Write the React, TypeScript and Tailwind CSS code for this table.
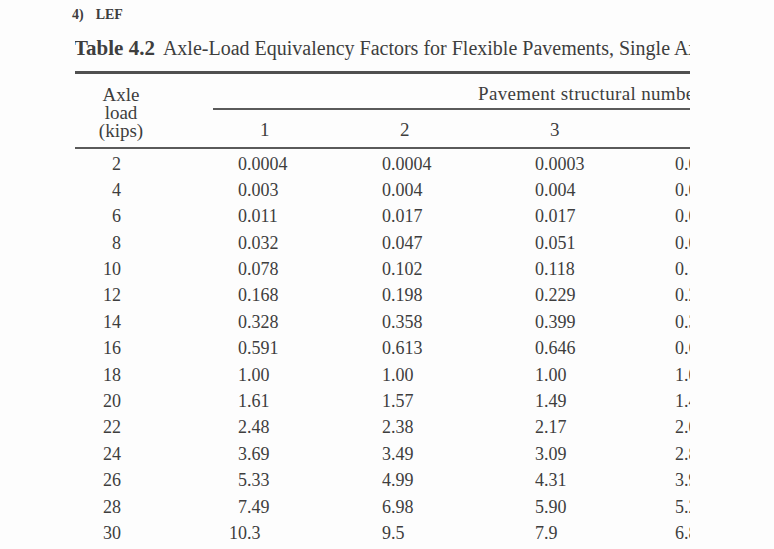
import React from "react";

const rows: [string, string, string, string, string][] = [
  ["2", "0.0004", "0.0004", "0.0003", "0.0002"],
  ["4", "0.003", "0.004", "0.004", "0.003"],
  ["6", "0.011", "0.017", "0.017", "0.013"],
  ["8", "0.032", "0.047", "0.051", "0.041"],
  ["10", "0.078", "0.102", "0.118", "0.102"],
  ["12", "0.168", "0.198", "0.229", "0.213"],
  ["14", "0.328", "0.358", "0.399", "0.388"],
  ["16", "0.591", "0.613", "0.646", "0.645"],
  ["18", "1.00", "1.00", "1.00", "1.00"],
  ["20", "1.61", "1.57", "1.49", "1.47"],
  ["22", "2.48", "2.38", "2.17", "2.09"],
  ["24", "3.69", "3.49", "3.09", "2.89"],
  ["26", "5.33", "4.99", "4.31", "3.91"],
  ["28", "7.49", "6.98", "5.90", "5.21"],
  ["30", "10.3", "9.5", "7.9", "6.83"],
];

// decimal-aligned value: integer part right-aligned in a fixed box
function Value({ v, pad }: { v: string; pad: string }) {
  const [int, frac] = v.split(".");
  return (
    <div className={`w-[150px] shrink-0 ${pad}`}>
      <span className="inline-block w-[18px] text-right">{int}</span>.{frac}
    </div>
  );
}

export default function App() {
  return (
    <div
      className="w-[774px] h-[549px] overflow-hidden bg-[#fdfdfd] text-[#3e3e3e]"
      style={{ fontFamily: '"Liberation Serif", "Times New Roman", serif' }}
    >
      <div className="pl-[72px] pt-[8px] text-[14px] leading-[14px] font-bold">
        4)<span className="ml-[12px]">LEF</span>
      </div>

      <div className="ml-[75px] w-[615px] overflow-hidden">
        <div className="mt-[16px] -ml-[1px] text-[20px] leading-[21px] whitespace-nowrap">
          <span className="font-bold text-[21px]">Table 4.2</span>
          <span className="ml-[8px]">
            Axle-Load Equivalency Factors for Flexible Pavements, Single Axles
          </span>
        </div>

        <div className="mt-[12px] h-[3px] bg-[#505050]" />

        {/* header */}
        <div className="flex text-[19px] leading-[18px]">
          <div className="w-[138px] shrink-0 pt-[12px] pr-[46px] text-center">
            <div>Axle</div>
            <div>load</div>
            <div>(kips)</div>
          </div>
          <div className="flex-1 flex flex-col whitespace-nowrap">
            <div className="pt-[11px] pl-[265px] tracking-[0.35px]">
              Pavement structural number (SN)
            </div>
            <div className="mt-[5px] h-[1.5px] w-[900px] bg-[#5a5a5a]" />
            <div className="flex mt-[11px]">
              <div className="w-[150px] shrink-0 pl-[47px]">1</div>
              <div className="w-[150px] shrink-0 pl-[37px]">2</div>
              <div className="w-[150px] shrink-0 pl-[37px]">3</div>
              <div className="w-[150px] shrink-0 pl-[30px]">4</div>
            </div>
          </div>
        </div>
        <div className="mt-[7px] h-[1.5px] bg-[#5a5a5a]" />

        {/* body */}
        <div className="pt-[2px] text-[18px] whitespace-nowrap">
          {rows.map((r) => (
            <div key={r[0]} className="flex h-[26.4px] leading-[26.4px]">
              <div className="w-[138px] shrink-0 pr-[92px] text-right">{r[0]}</div>
              <Value v={r[1]} pad="pl-[16px]" />
              <Value v={r[2]} pad="pl-[10px]" />
              <Value v={r[3]} pad="pl-[13px]" />
              <Value v={r[4]} pad="pl-[3px]" />
            </div>
          ))}
        </div>
      </div>
    </div>
  );
}
